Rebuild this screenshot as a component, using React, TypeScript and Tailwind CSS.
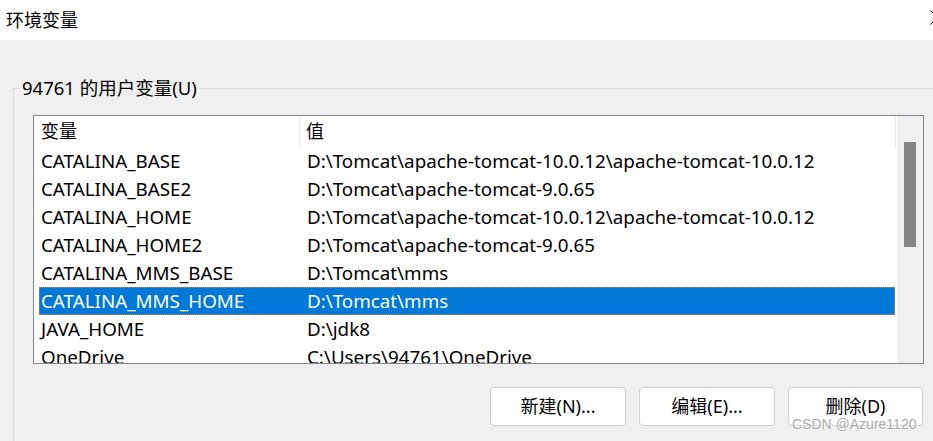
const rows: [string, string][] = [
  ["CATALINA_BASE", "D:\\Tomcat\\apache-tomcat-10.0.12\\apache-tomcat-10.0.12"],
  ["CATALINA_BASE2", "D:\\Tomcat\\apache-tomcat-9.0.65"],
  ["CATALINA_HOME", "D:\\Tomcat\\apache-tomcat-10.0.12\\apache-tomcat-10.0.12"],
  ["CATALINA_HOME2", "D:\\Tomcat\\apache-tomcat-9.0.65"],
  ["CATALINA_MMS_BASE", "D:\\Tomcat\\mms"],
  ["CATALINA_MMS_HOME", "D:\\Tomcat\\mms"],
  ["JAVA_HOME", "D:\\jdk8"],
  ["OneDrive", "C:\\Users\\94761\\OneDrive"],
];

const selected = 5;

const font = "font-['Noto_Sans','Noto_Sans_CJK_SC',sans-serif]";

export default function App() {
  return (
    <div className={`relative w-[933px] h-[441px] overflow-hidden bg-[#f0f0f0] text-black ${font}`}>
      {/* title bar */}
      <div className="relative h-10 bg-white flex items-center pl-[6px]">
        <span className="text-[18px] leading-none">环境变量</span>
        <svg className="absolute left-[930px] top-[10px]" width="15" height="15" viewBox="0 0 15 15">
          <path d="M0.5 0.5L14.5 14.5M14.5 0.5L0.5 14.5" stroke="#000" strokeWidth="1" fill="none" />
        </svg>
      </div>

      {/* group box */}
      <fieldset className="ml-[13px] mt-[36px] border-l border-t border-[#dcdcdc] h-[400px] pl-[5px]">
        <legend className="px-[3px] text-[18.5px] leading-[24px]">94761 的用户变量(U)</legend>

        <div className="ml-[14px] mt-[15px] w-[891px] h-[249px] border border-[#828790] bg-white flex overflow-hidden">
          <div className="w-[862px] flex flex-col">
            {/* header */}
            <div className="h-[31px] shrink-0 flex text-[18px]">
              <div className="w-[266px] pl-[7px] flex items-center border-r border-[#e5e5e5]">变量</div>
              <div className="flex-1 pl-[6px] flex items-center border-r border-[#e5e5e5]">值</div>
            </div>
            {rows.map(([name, value], i) => (
              <div
                key={name}
                className={`ml-[5px] w-[856px] h-[28px] shrink-0 flex items-center text-[18.8px] ${
                  i === selected ? "bg-[#0078d7] text-white outline outline-1 outline-dotted outline-[#d9822b] -outline-offset-1" : ""
                }`}
              >
                <div className="w-[268px] pl-[2px] whitespace-nowrap">{name}</div>
                <div className="flex-1 whitespace-nowrap">{value}</div>
              </div>
            ))}
          </div>
          {/* scrollbar */}
          <div className="w-[27px] bg-[#f0f0f0] border-l border-white">
            <div className="ml-[7px] mt-[26px] w-[12px] h-[105px] bg-[#858585]" />
          </div>
        </div>

        {/* buttons */}
        <div className="mt-[23px] flex gap-[13px] pl-[471px] text-[18px]">
          <button className="w-[136px] h-[39px] bg-white border border-[#d0d0d0] rounded-[4px]">新建(N)...</button>
          <button className="w-[136px] h-[39px] bg-white border border-[#d0d0d0] rounded-[4px]">编辑(E)...</button>
          <button className="w-[135px] h-[39px] bg-white border border-[#d0d0d0] rounded-[4px]">删除(D)</button>
        </div>
      </fieldset>

      <span className="absolute left-[792px] top-[417px] text-[14px] leading-none text-[#aaaaaa] [text-shadow:0_0_1px_#fff,0_0_2px_#fff,0_0_2px_#fff] font-['Liberation_Sans',sans-serif]">
        CSDN @Azure1120
      </span>
    </div>
  );
}
